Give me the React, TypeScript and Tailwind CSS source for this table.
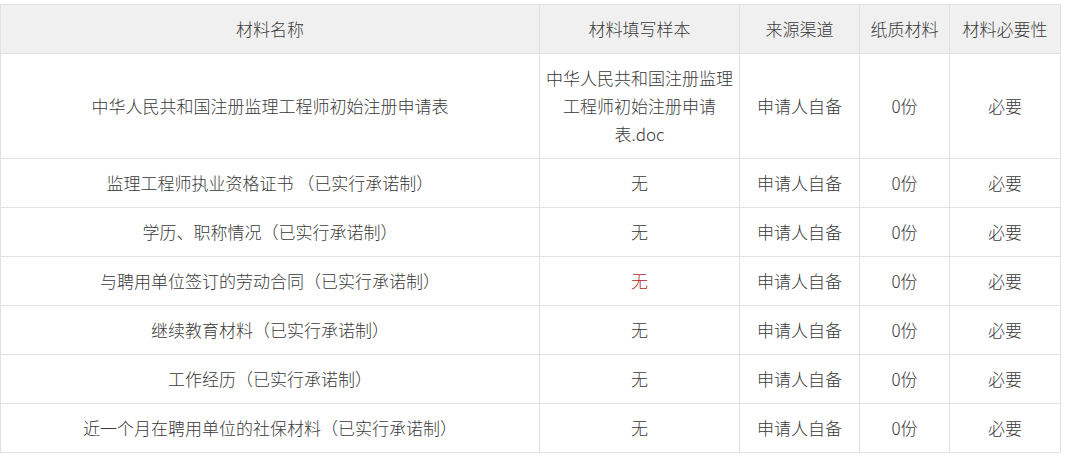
import React from 'react';

interface Row {
  name: string;
  sample: string;
  source: string;
  paper: string;
  required: string;
  redSample?: boolean;
}

const rows: Row[] = [
  { name: '中华人民共和国注册监理工程师初始注册申请表', sample: '中华人民共和国注册监理工程师初始注册申请表.doc', source: '申请人自备', paper: '0份', required: '必要' },
  { name: '监理工程师执业资格证书 （已实行承诺制）', sample: '无', source: '申请人自备', paper: '0份', required: '必要' },
  { name: '学历、职称情况（已实行承诺制）', sample: '无', source: '申请人自备', paper: '0份', required: '必要' },
  { name: '与聘用单位签订的劳动合同（已实行承诺制）', sample: '无', source: '申请人自备', paper: '0份', required: '必要', redSample: true },
  { name: '继续教育材料（已实行承诺制）', sample: '无', source: '申请人自备', paper: '0份', required: '必要' },
  { name: '工作经历（已实行承诺制）', sample: '无', source: '申请人自备', paper: '0份', required: '必要' },
  { name: '近一个月在聘用单位的社保材料（已实行承诺制）', sample: '无', source: '申请人自备', paper: '0份', required: '必要' },
];

const headers = ['材料名称', '材料填写样本', '来源渠道', '纸质材料', '材料必要性'];

// shared cell style
const cell = 'border border-[#e2e2e2] px-[5px] py-[10px]';

export default function App() {
  return (
    <div
      className="w-[1066px] h-[457px] bg-white pt-[4px] text-[#3a3a3a] text-[17px] leading-[28px] font-light"
      style={{ fontFamily: '"Noto Sans CJK SC", "Noto Sans", sans-serif' }}
    >
      <table className="w-[1060px] table-fixed border-collapse border border-[#e2e2e2] text-center">
        <colgroup>
          <col className="w-[539px]" />
          <col className="w-[200px]" />
          <col className="w-[120px]" />
          <col className="w-[90px]" />
          <col className="w-[111px]" />
        </colgroup>
        <thead>
          <tr className="bg-[#f0f0f0]">
            {headers.map((h) => (
              <th key={h} className={`${cell} font-light`}>
                {h}
              </th>
            ))}
          </tr>
        </thead>
        <tbody>
          {rows.map((r) => (
            <tr key={r.name}>
              <td className={cell}>{r.name}</td>
              <td className={`${cell} ${r.redSample ? 'text-[#b8262b]' : ''}`}>{r.sample}</td>
              <td className={cell}>{r.source}</td>
              <td className={cell}>{r.paper}</td>
              <td className={cell}>{r.required}</td>
            </tr>
          ))}
        </tbody>
      </table>
    </div>
  );
}
